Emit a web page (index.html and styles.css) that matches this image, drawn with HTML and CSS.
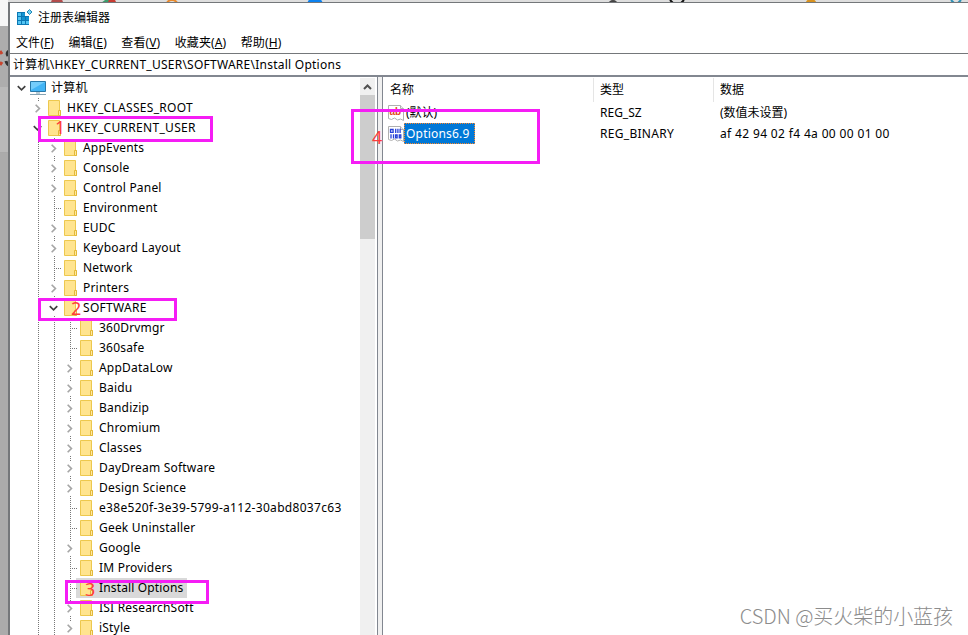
FILE: index.html
```html
<!DOCTYPE html>
<html lang="zh-CN">
<head>
    <meta charset="UTF-8">
    <meta name="viewport" content="width=device-width, initial-scale=1.0">
    <title>注册表编辑器</title>
    <link rel="stylesheet" href="styles.css">
</head>
<body>
    <svg class="backdrop" width="968" height="635" aria-hidden="true">
        <circle cx="57" cy="3" r="6" fill="#b34c4c"/>
        <path d="M101 3l4-3h5v3z" fill="#3c9c6c"/>
        <circle cx="112" cy="3" r="4" fill="#c83c32"/>
        <circle cx="172" cy="6" r="6" fill="none" stroke="#e8892c" stroke-width="2"/>
        <circle cx="315" cy="5" r="8" fill="#0c82f0"/>
        <circle cx="613" cy="5" r="5" fill="#444"/>
        <path d="M670 0l4 4M684 0l-4 4" stroke="#111" stroke-width="2"/>
        <circle cx="811" cy="5" r="6" fill="#d9921e"/>
        <path d="M951 0l4 4M961 0l-4 4" stroke="#2b8fb5" stroke-width="2"/>
        <path d="M0 51l2 3M0 65l2-3" stroke="#c8452f" stroke-width="3" fill="none"/>
        <path d="M9 51q-3 2-1 5M6 61q1 4 3 4" stroke="#333" stroke-width="3" fill="none"/>
    </svg>

    <svg class="symbols" width="0" height="0" aria-hidden="true">
        <symbol id="folder" viewBox="0 0 16 16">
            <path d="M.5.5h11v10h1v5H.5z" fill="#ffe48f" stroke="#edc84e"/>
            <path d="M10.500 15.500v-5h2v5z" fill="#ffe9a2" stroke="#e3b93a"/>
        </symbol>
        <symbol id="closed" viewBox="0 0 16 16">
            <path d="M5.500 4l4 4-4 4" fill="none" stroke="#a6a6a6" stroke-width="1.800"/>
        </symbol>
        <symbol id="open" viewBox="0 0 16 16">
            <path d="M3.500 5.500l4 4 4-4" fill="none" stroke="#404040" stroke-width="1.800"/>
        </symbol>
        <symbol id="page" viewBox="0 0 16 16">
            <path d="M.5.5h12l3 3v12l-3-1.500-3 1-3-2-3 1.500-3-1z" fill="#fff" stroke="#b0b0b0"/>
            <path d="M12.500.5v3h3" fill="#eee" stroke="#b0b0b0"/>
        </symbol>
    </svg>

    <div class="window">
        <header class="title-bar">
            <svg width="17" height="17" viewBox="0 0 17 17">
                <path d="M1 3h8v4h4v9H1z" fill="#0b78b4"/>
                <path d="M2 4h3v3H2zM2 8h3v3H2zM2 12h3v3H2zM6 12h3v3H6zM10 12h3v3h-3z" fill="#52c4f2"/>
                <path d="M6 4h3v3H6zM6 8h3v3H6zM10 8h3v3h-3z" fill="#1494d2"/>
                <path d="M13.500.5l2.500 2.500-2.500 2.500L11 3z" fill="#6fd0f5" stroke="#2589b5"/>
            </svg>
            <span>注册表编辑器</span>
        </header>
        <nav class="menu-bar">
            <span>文件(<u>F</u>)</span>
            <span>编辑(<u>E</u>)</span>
            <span>查看(<u>V</u>)</span>
            <span>收藏夹(<u>A</u>)</span>
            <span>帮助(<u>H</u>)</span>
        </nav>
        <div class="address-bar">计算机\HKEY_CURRENT_USER\SOFTWARE\Install Options</div>

        <main class="panes">
            <div class="tree-pane">
                <ul class="tree">
                    <li>
                        <div class="node">
                            <svg class="toggle"><use href="#open"/></svg>
                            <svg class="computer" width="17" height="16" viewBox="0 0 17 16">
                                <path d="M.5 1.500h15v10H.5z" fill="#42b4f5" stroke="#2878a8"/>
                                <path d="M1 2h14L1 10z" fill="#74cdfb"/>
                                <path d="M6 12h4v2H6z" fill="#b8cbd5"/>
                                <path d="M0 14.500h16" stroke="#86a3b3"/>
                            </svg>
                            <span>计算机</span>
                        </div>
                        <ul>
                            <li><div class="node node--hive"><svg class="toggle"><use href="#closed"/></svg><svg class="folder"><use href="#folder"/></svg><span>HKEY_CLASSES_ROOT</span></div></li>
                            <li>
                                <div class="node node--hive"><svg class="toggle"><use href="#open"/></svg><svg class="folder"><use href="#folder"/></svg><span>HKEY_CURRENT_USER</span></div>
                                <ul>
                                    <li><div class="node"><svg class="toggle"><use href="#closed"/></svg><svg class="folder"><use href="#folder"/></svg><span>AppEvents</span></div></li>
                                    <li><div class="node"><svg class="toggle"><use href="#closed"/></svg><svg class="folder"><use href="#folder"/></svg><span>Console</span></div></li>
                                    <li><div class="node"><svg class="toggle"><use href="#closed"/></svg><svg class="folder"><use href="#folder"/></svg><span>Control Panel</span></div></li>
                                    <li><div class="node"><i class="branch"></i><svg class="folder"><use href="#folder"/></svg><span>Environment</span></div></li>
                                    <li><div class="node"><svg class="toggle"><use href="#closed"/></svg><svg class="folder"><use href="#folder"/></svg><span>EUDC</span></div></li>
                                    <li><div class="node"><svg class="toggle"><use href="#closed"/></svg><svg class="folder"><use href="#folder"/></svg><span>Keyboard Layout</span></div></li>
                                    <li><div class="node"><i class="branch"></i><svg class="folder"><use href="#folder"/></svg><span>Network</span></div></li>
                                    <li><div class="node"><svg class="toggle"><use href="#closed"/></svg><svg class="folder"><use href="#folder"/></svg><span>Printers</span></div></li>
                                    <li>
                                        <div class="node node--hive"><svg class="toggle"><use href="#open"/></svg><svg class="folder"><use href="#folder"/></svg><span>SOFTWARE</span></div>
                                        <ul>
                                            <li><div class="node"><i class="branch"></i><svg class="folder"><use href="#folder"/></svg><span>360Drvmgr</span></div></li>
                                            <li><div class="node"><i class="branch"></i><svg class="folder"><use href="#folder"/></svg><span>360safe</span></div></li>
                                            <li><div class="node"><svg class="toggle"><use href="#closed"/></svg><svg class="folder"><use href="#folder"/></svg><span>AppDataLow</span></div></li>
                                            <li><div class="node"><svg class="toggle"><use href="#closed"/></svg><svg class="folder"><use href="#folder"/></svg><span>Baidu</span></div></li>
                                            <li><div class="node"><svg class="toggle"><use href="#closed"/></svg><svg class="folder"><use href="#folder"/></svg><span>Bandizip</span></div></li>
                                            <li><div class="node"><svg class="toggle"><use href="#closed"/></svg><svg class="folder"><use href="#folder"/></svg><span>Chromium</span></div></li>
                                            <li><div class="node"><svg class="toggle"><use href="#closed"/></svg><svg class="folder"><use href="#folder"/></svg><span>Classes</span></div></li>
                                            <li><div class="node"><svg class="toggle"><use href="#closed"/></svg><svg class="folder"><use href="#folder"/></svg><span>DayDream Software</span></div></li>
                                            <li><div class="node"><svg class="toggle"><use href="#closed"/></svg><svg class="folder"><use href="#folder"/></svg><span>Design Science</span></div></li>
                                            <li><div class="node node--hive"><i class="branch"></i><svg class="folder"><use href="#folder"/></svg><span>e38e520f-3e39-5799-a112-30abd8037c63</span></div></li>
                                            <li><div class="node"><i class="branch"></i><svg class="folder"><use href="#folder"/></svg><span>Geek Uninstaller</span></div></li>
                                            <li><div class="node"><svg class="toggle"><use href="#closed"/></svg><svg class="folder"><use href="#folder"/></svg><span>Google</span></div></li>
                                            <li><div class="node"><i class="branch"></i><svg class="folder"><use href="#folder"/></svg><span>IM Providers</span></div></li>
                                            <li><div class="node node--selected"><i class="branch"></i><svg class="folder"><use href="#folder"/></svg><span>Install Options</span></div></li>
                                            <li><div class="node"><svg class="toggle"><use href="#closed"/></svg><svg class="folder"><use href="#folder"/></svg><span>ISI ResearchSoft</span></div></li>
                                            <li><div class="node"><svg class="toggle"><use href="#closed"/></svg><svg class="folder"><use href="#folder"/></svg><span>iStyle</span></div></li>
                                        </ul>
                                    </li>
                                </ul>
                            </li>
                        </ul>
                    </li>
                </ul>
                <div class="scrollbar">
                    <svg width="15" height="17" viewBox="0 0 15 17"><path d="M4 11l3.500-3.500L11 11" fill="none" stroke="#505050" stroke-width="2"/></svg>
                    <div class="thumb"></div>
                </div>
            </div>

            <div class="splitter"></div>

            <div class="value-pane">
                <div class="value-row value-row--head">
                    <span>名称</span>
                    <span>类型</span>
                    <span>数据</span>
                </div>
                <div class="value-row">
                    <div class="value-name">
                        <svg width="16" height="16" viewBox="0 0 16 16"><use href="#page"/><text x="1.500" y="10" class="glyph glyph--string">ab</text></svg>
                        <span>(默认)</span>
                    </div>
                    <span>REG_SZ</span>
                    <span>(数值未设置)</span>
                </div>
                <div class="value-row">
                    <div class="value-name value-name--selected">
                        <svg width="16" height="16" viewBox="0 0 16 16">
                            <use href="#page"/>
                            <g fill="none" stroke="#2440d8" stroke-width="1.300">
                                <path d="M2.500 3.500h2.600v2.800H2.500zM7.700 2.800V7M9.900 2.800V7M12.100 2.800V7"/>
                                <path d="M3 8.300v4.200M5.500 8.300v4.200M7.600 9h1.500v2.800H7.600zM11.300 9h1.500v2.800h-1.500z"/>
                            </g>
                        </svg>
                        <span>Options6.9</span>
                    </div>
                    <span class="value-type">REG_BINARY</span>
                    <span class="value-data">af 42 94 02 f4 4a 00 00 01 00</span>
                </div>
                <div class="watermark">CSDN @买火柴的小蓝孩</div>
            </div>
        </main>
    </div>

    <!-- numbered steps over the window -->
    <div class="mark mark--1"><b>1</b></div>
    <div class="mark mark--2"><b>2</b></div>
    <div class="mark mark--3"><b>3</b></div>
    <div class="mark mark--4"><b>4</b></div>
</body>
</html>
```
FILE: styles.css
```css
:root {
    --frame: #74777a;
    --pane-border: #828790;
    --mark: #f51df5;
    --select: #0078d7;
    --row: 20px;
}

* {
    box-sizing: border-box;
}

body {
    margin: 0;
    position: relative;
    width: 968px;
    height: 635px;
    padding: 2px 0 0 8px;
    overflow: hidden;
    background:
        linear-gradient(#dedede, #dedede) 8px 0 / 100% 2px no-repeat,
        linear-gradient(#f6f6f6 26px, #adadad 26px, #adadad 87px, #b9b9b9 87px, #b9b9b9 152px, #a9a9a9 152px, #a9a9a9 153px, #ababab 153px);
    color: #000;
    font-family: "Noto Sans", "Noto Sans CJK SC", sans-serif;
    font-size: 12px;
    line-height: var(--row);
}

.backdrop {
    position: absolute;
    left: 0;
    top: 0;
}

.symbols {
    position: absolute;
}

.window {
    position: relative;
    display: flex;
    flex-direction: column;
    height: 633px;
    border: 1px solid var(--frame);
    border-width: 1px 0 0 2px;
    background: #fff;
}

.title-bar {
    display: flex;
    align-items: center;
    gap: 5px;
    height: 29px;
    padding-left: 6px;
    flex-shrink: 0;
}

.menu-bar {
    display: flex;
    gap: 14.500px;
    height: 21px;
    padding: 1px 0 0 6px;
    flex-shrink: 0;
    white-space: nowrap;
    letter-spacing: 0.1px;
}

.address-bar {
    height: 24px;
    padding: 1px 0 0 3px;
    border-top: 1px solid var(--frame);
    border-bottom: 2px solid var(--pane-border);
    flex-shrink: 0;
    letter-spacing: 0.25px;
}

.panes {
    display: flex;
    flex: 1;
    min-height: 0;
}

.tree-pane {
    display: flex;
    width: 368px;
    padding-top: 1px;
    border-right: 1px solid var(--pane-border);
    overflow: hidden;
}

.tree {
    flex: 1;
    padding-left: 4px;
}

.tree,
.tree ul {
    margin: 0;
    list-style: none;
}

.tree ul {
    padding-left: 16px;
}

.tree ul li {
    background: linear-gradient(#777 50%, transparent 50%) 8px 0 / 1px 2px repeat-y;
}

.node {
    display: flex;
    align-items: center;
    height: var(--row);
    white-space: nowrap;
    letter-spacing: 0.2px;
}

.node--hive {
    letter-spacing: 0.3px;
}

.node span {
    margin-left: 3px;
}

.toggle {
    width: 16px;
    height: 15px;
    background: #fff;
}

.branch {
    width: 16px;
    height: 1px;
    background: linear-gradient(90deg, #777 50%, transparent 50%) 0 0 / 2px 1px repeat-x;
    background-origin: content-box;
    background-clip: content-box;
    padding: 0 0 0 8px;
}

.folder {
    width: 16px;
    height: 16px;
    margin-left: 2px;
}

.computer {
    margin-right: 1px;
}

.node--selected {
    width: 125px;
    letter-spacing: 0.15px;
    background: linear-gradient(#d9d9d9, #d9d9d9) 14px 0 / 111px 100% no-repeat;
}

.scrollbar {
    width: 15px;
    margin-right: 2px;
    background: #f0f0f0;
}

.scrollbar svg {
    display: block;
}

.thumb {
    height: 144px;
    background: #cdcdcd;
}

.splitter {
    width: 5px;
    background: #f0f0f0;
    border-right: 1px solid var(--pane-border);
}

.value-pane {
    display: flex;
    flex-direction: column;
    flex: 1;
    padding: 1px 0 0 5px;
}

.value-row {
    display: grid;
    grid-template-columns: 212px 120px 1fr;
    height: 21px;
    line-height: 21px;
}

.value-row--head {
    height: 24px;
    line-height: 23px;
    margin-left: 2px;
    grid-template-columns: 203px 120px 1fr;
}

.value-row--head span + span {
    padding-left: 6px;
    border-left: 1px solid #e5e5e5;
}

.value-name {
    display: flex;
    align-items: center;
}

.value-name span {
    padding: 0 2px;
}

.value-name--selected span {
    padding: 0 5px 0 2px;
    letter-spacing: 0.2px;
    background: var(--select);
    color: #fff;
    outline: 1px dotted #ff8728;
    outline-offset: -1px;
}

.value-type {
    letter-spacing: 0.3px;
}

.value-data {
    letter-spacing: 0.35px;
}

.glyph {
    font: bold 10px "Liberation Sans", sans-serif;
}

.glyph--string {
    fill: #e04a20;
}

.watermark {
    margin: auto 15px 7px auto;
    color: #8c8c8c;
    font: 300 20px/24px "Noto Sans CJK SC", sans-serif;
    letter-spacing: -0.05px;
    white-space: nowrap;
}

.mark {
    position: absolute;
    border: 3px solid var(--mark);
}

.mark b {
    position: absolute;
    color: #ff3c3c;
    font: 18px/18px "Noto Sans", sans-serif;
}

.mark--1 {
    left: 38px;
    top: 116px;
    width: 175px;
    height: 26px;
}

.mark--1 b {
    left: 14px;
    top: -1px;
}

.mark--2 {
    left: 38px;
    top: 298px;
    width: 139px;
    height: 23px;
}

.mark--2 b {
    left: 30px;
    top: -2px;
}

.mark--3 {
    left: 65px;
    top: 580px;
    width: 144px;
    height: 24px;
}

.mark--3 b {
    left: 17px;
    top: -3px;
}

.mark--4 {
    left: 351px;
    top: 109px;
    width: 189px;
    height: 55px;
}

.mark--4 b {
    left: 18px;
    top: 16px;
}
```
